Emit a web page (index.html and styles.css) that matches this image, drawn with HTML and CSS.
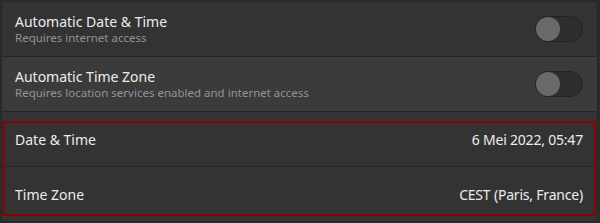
FILE: index.html
```html
<!DOCTYPE html>
<html lang="en">
<head>
  <meta charset="UTF-8">
  <title>Date &amp; Time</title>
  <link rel="stylesheet" href="styles.css">
</head>
<body>
  <div class="list">
    <div class="row">
      <div class="labels">
        <div class="title">Automatic Date &amp; Time</div>
        <div class="subtitle">Requires internet access</div>
      </div>
      <div class="switch"><div class="knob"></div></div>
    </div>
    <div class="row hover">
      <div class="labels">
        <div class="title">Automatic Time Zone</div>
        <div class="subtitle">Requires location services enabled and internet access</div>
      </div>
      <div class="switch"><div class="knob"></div></div>
    </div>
    <div class="row">
      <div class="title">Date &amp; Time</div>
      <div class="value">6 Mei 2022, 05:47</div>
    </div>
    <div class="row">
      <div class="title">Time Zone</div>
      <div class="value">CEST (Paris, France)</div>
    </div>
    <div class="highlight"></div>
  </div>
</body>
</html>
```

FILE: styles.css
```css
* { margin: 0; padding: 0; box-sizing: border-box; }
body {
  font-family: "Noto Sans", "Open Sans", sans-serif;
  background: #2b2b2b;
  padding: 1px 2px 0 1px;
}
.list {
  position: relative;
  border: 1px solid #262626;
  background: #262626;
  display: flex;
  flex-direction: column;
  gap: 1px;
}
.row {
  height: 54px;
  background: #333333;
  display: flex;
  align-items: center;
  justify-content: space-between;
  padding: 0 14px 0 13px;
}
.row.hover { background: #3b3b3b; }
.labels {
  display: flex;
  flex-direction: column;
  gap: 1px;
}
.title {
  color: #ececec;
  font-size: 14px;
  line-height: 17px;
}
.subtitle {
  color: #8c959e;
  font-size: 11.5px;
  line-height: 14px;
}
.value {
  color: #ececec;
  font-size: 14px;
  letter-spacing: -0.2px;
}
.switch {
  width: 48px;
  height: 26px;
  border-radius: 13px;
  background: #2e2e2e;
  border: 1px solid #242424;
  display: flex;
  align-items: center;
}
.knob {
  width: 24px;
  height: 24px;
  border-radius: 50%;
  background: #6a6a6a;
}
/* red annotation box over the last two rows */
.highlight {
  position: absolute;
  left: 1px;
  right: 1px;
  top: 119px;
  bottom: 5px;
  border: 2px solid #8b0000;
  pointer-events: none;
}
```
